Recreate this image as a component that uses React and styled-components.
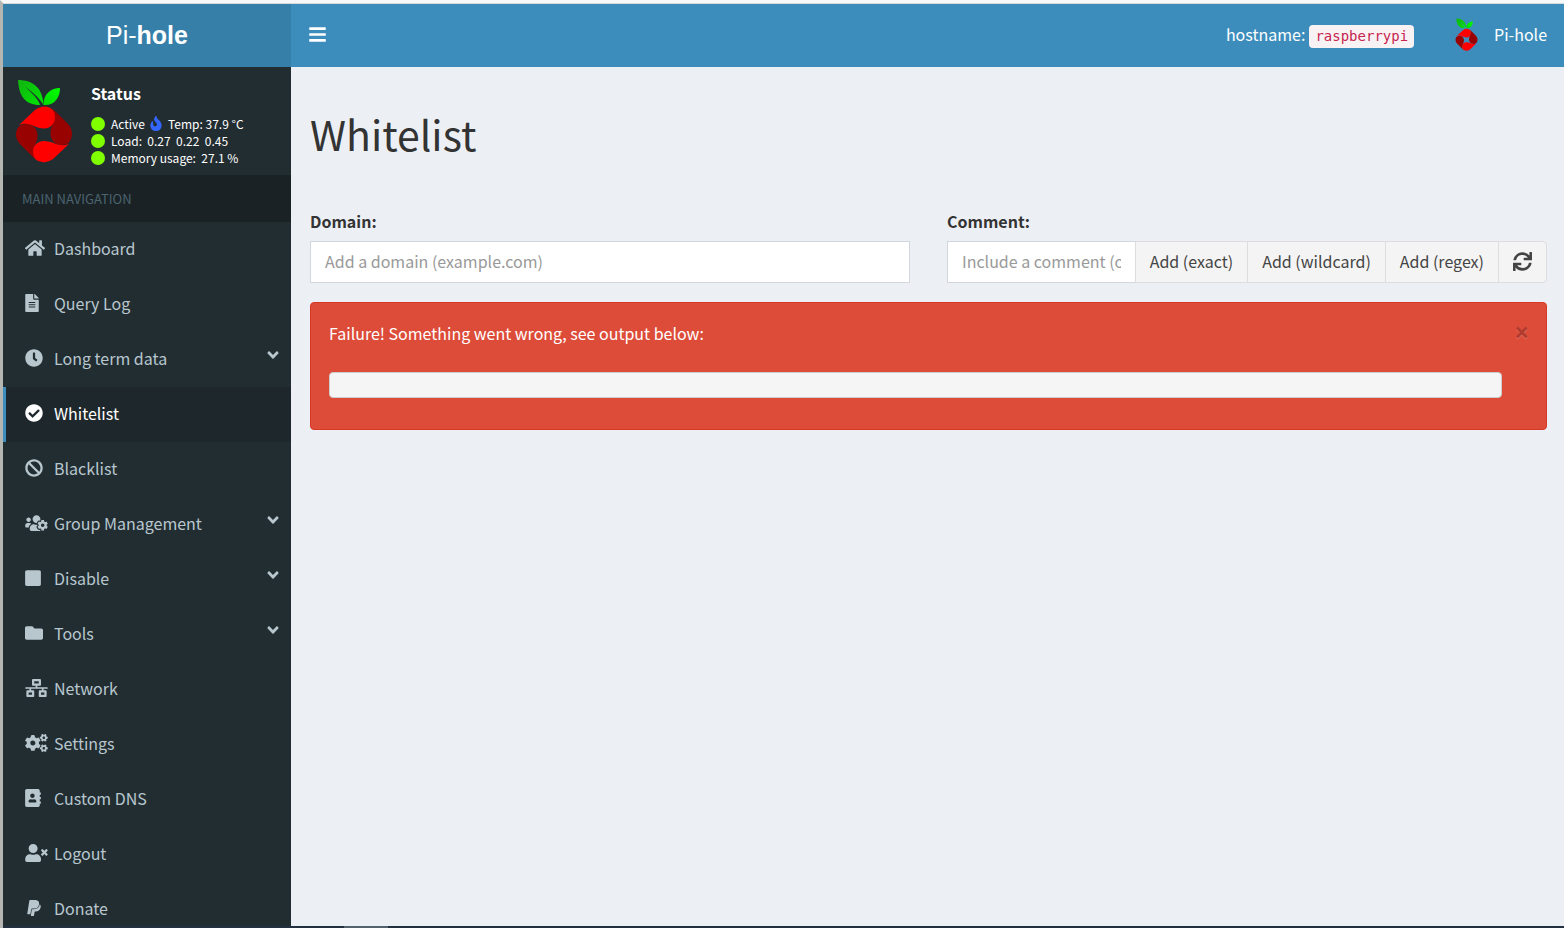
import React from 'react';
import styled, {createGlobalStyle} from 'styled-components';
import {
	FaAddressBook,
	FaAngleDown,
	FaBan,
	FaBars,
	FaCheckCircle,
	FaClock,
	FaCogs,
	FaFileAlt,
	FaFire,
	FaFolder,
	FaHome,
	FaNetworkWired,
	FaPaypal,
	FaSquare,
	FaSync,
	FaUsersCog,
	FaUserTimes,
} from 'react-icons/fa';

const GlobalStyle = createGlobalStyle`
	* {
		box-sizing: border-box;
	}

	body {
		margin: 0;
		background: #ecf0f5;
		color: #333;
		font-family: 'Noto Sans CJK SC', 'Noto Sans', sans-serif;
		font-size: 16px;
		line-height: 25px;
	}

	button,
	input {
		font: inherit;
	}

	a {
		color: inherit;
		text-decoration: none;
	}
`;

const Page = styled.div`
	display: flex;
	flex-direction: column;
	height: 100vh;
	overflow: hidden;
	border-top: 3px solid #f8f8f8;
	border-left: 3px solid #b5b5b1;
`;

const Header = styled.header`
	display: flex;
	flex: none;
	height: 64px;
	border-top: 1px solid #d5dade;
	background: #3c8dbc;
	color: #fff;
`;

const Brand = styled.a`
	flex: none;
	width: 288px;
	background: #367fa9;
	font-family: 'Liberation Sans', Arial, sans-serif;
	font-size: 25px;
	line-height: 63px;
	text-align: center;
`;

const Navbar = styled.nav`
	display: flex;
	flex: 1;
	align-items: center;
	padding: 0 17px 2px 18px;
`;

const MenuToggle = styled.button`
	display: flex;
	margin-right: auto;
	padding: 0;
	border: none;
	background: none;
	color: #fff;

	svg {
		width: 17px;
		height: 19px;
	}
`;

const Hostname = styled.span`
	display: flex;
	align-items: center;
	gap: 4px;
`;

const Code = styled.code`
	margin-top: 3px;
	padding: 0 6px;
	border-radius: 4px;
	background: #f9f2f4;
	color: #c7254e;
	font-family: 'DejaVu Sans Mono', monospace;
	font-size: 14px;
	line-height: 23px;
`;

const UserLink = styled.a`
	display: flex;
	align-items: center;
	gap: 16px;
	margin-left: 41px;
`;

const Body = styled.div`
	display: flex;
	flex: 1;
	min-height: 0;
`;

const Sidebar = styled.aside`
	flex: none;
	width: 288px;
	overflow: hidden;
	background: #222d32;
	color: #b8c7ce;
`;

const UserPanel = styled.section`
	display: flex;
	gap: 18px;
	padding: 12px 12px 0;
	height: 108px;
	color: #fff;
`;

const Status = styled.div`
	padding-top: 2px;
`;

const StatusTitle = styled.p`
	margin: 0 0 10px;
	font-weight: 600;
	line-height: 24px;
`;

const StatusLine = styled.div`
	display: flex;
	align-items: center;
	font-size: 12px;
	line-height: 17px;
	white-space: pre;

	svg {
		width: 12px;
		height: 15px;
		margin: 0 6px 0 5px;
		color: #3366ff;
	}
`;

const Dot = styled.i`
	width: 14px;
	height: 14px;
	margin-right: 6px;
	border-radius: 50%;
	background: #7fff00;
`;

const NavHeading = styled.h2`
	margin: 0;
	padding: 0 19px;
	background: #1a2226;
	color: #4b646f;
	font-size: 13px;
	font-weight: 400;
	line-height: 47px;
`;

const NavList = styled.ul`
	margin: 0;
	padding: 0;
	list-style: none;
`;

const NavLink = styled.a`
	display: flex;
	align-items: center;
	gap: 4px;
	height: 55px;
	padding: 0 9px 2px 19px;
	border-left: 3px solid ${(props) => (props.$active ? '#3c8dbc' : 'transparent')};
	background: ${(props) => (props.$active ? '#1e282c' : 'transparent')};
	color: ${(props) => (props.$active ? '#fff' : '#b8c7ce')};
`;

const NavIcon = styled.span`
	display: flex;
	width: 25px;
	padding-bottom: 1px;

	svg {
		flex: none;
		width: ${(props) => props.$width || 18}px;
		height: 18px;
	}
`;

const NavArrow = styled(FaAngleDown)`
	margin: 0 0 7px auto;
	font-size: 18px;
`;

const Content = styled.main`
	flex: 1;
	min-width: 0;
	padding: 31px 17px 0 19px;
`;

const Title = styled.h1`
	margin: 0 0 41px;
	font-size: 41px;
	font-weight: 400;
	line-height: 70px;
`;

const FormRow = styled.div`
	display: grid;
	grid-template-columns: 1fr 1fr;
	gap: 37px;
	margin-bottom: 19px;
`;

const Field = styled.div`
	min-width: 0;
`;

const Label = styled.label`
	display: block;
	margin-bottom: 7px;
	font-weight: 700;
`;

const Input = styled.input`
	flex: 1;
	width: 100%;
	min-width: 0;
	height: 42px;
	padding: 0 14px 2px;
	border: 1px solid #d2d6de;
	border-radius: 0;
	background: #fff;
	color: #555;

	&::placeholder {
		color: #999;
		opacity: 1;
	}
`;

const InputGroup = styled.div`
	display: flex;
`;

const Button = styled.button`
	display: flex;
	align-items: center;
	height: 42px;
	margin-left: -1px;
	padding: 0 14px 2px;
	border: 1px solid #ddd;
	background: #f4f4f4;
	color: #444;
	white-space: nowrap;

	&:last-child {
		border-radius: 0 4px 4px 0;
	}

	svg {
		font-size: 19px;
	}
`;

const Alert = styled.div`
	position: relative;
	padding: 18px 44px 31px 18px;
	border: 1px solid #d73925;
	border-radius: 4px;
	background: #dd4b39;
	color: #fff;
`;

const Close = styled.button`
	position: absolute;
	top: 17px;
	right: 17px;
	padding: 0;
	border: none;
	background: none;
	color: #000;
	font-family: 'Noto Sans', sans-serif;
	font-size: 26px;
	font-weight: 700;
	text-shadow: 0 1px 0 #fff;
	opacity: 0.2;
`;

const Output = styled.pre`
	height: 26px;
	margin: 26px 0 0;
	border: 1px solid #ccc;
	border-radius: 4px;
	background: #f5f5f5;
`;

const BottomEdge = styled.div`
	display: flex;
	flex: none;
	height: 2px;
	padding-left: 341px;
	background: #22303f;

	&::before {
		content: '';
		width: 44px;
		background: #53626c;
	}
`;

const navItems = [
	{label: 'Dashboard', icon: FaHome, width: 20},
	{label: 'Query Log', icon: FaFileAlt, width: 14},
	{label: 'Long term data', icon: FaClock, tree: true},
	{label: 'Whitelist', icon: FaCheckCircle, active: true},
	{label: 'Blacklist', icon: FaBan},
	{label: 'Group Management', icon: FaUsersCog, width: 23, tree: true},
	{label: 'Disable', icon: FaSquare, width: 16, tree: true},
	{label: 'Tools', icon: FaFolder, tree: true},
	{label: 'Network', icon: FaNetworkWired, width: 23},
	{label: 'Settings', icon: FaCogs, width: 23},
	{label: 'Custom DNS', icon: FaAddressBook, width: 16},
	{label: 'Logout', icon: FaUserTimes, width: 23},
	{label: 'Donate', icon: FaPaypal},
];

const Logo = ({id, width, height}) => (
	<svg width={width} height={height} viewBox="0 0 58 84" aria-hidden="true">
		<defs>
			<linearGradient id={`${id}-a`} x1="0" y1="0" x2="1" y2="1">
				<stop offset="0" stopColor="#12b212" />
				<stop offset="1" stopColor="#00e600" />
			</linearGradient>
			<linearGradient id={`${id}-b`} x1="0" y1="1" x2="1" y2="0">
				<stop offset="0" stopColor="#00d800" />
				<stop offset="1" stopColor="#00ff00" />
			</linearGradient>
		</defs>
		<path fill={`url(#${id}-a)`} d="M3 1C18 1 28 9 28.500 26C26 21 19 14 10 7.500C17 14 24 21 25 26C10 26 4 17 3 1Z" />
		<path fill={`url(#${id}-b)`} d="M45 9C36 9 28 15 28.500 26C39 27 45 19 45 9Z" />
		<path fill="#980200" d="M38 30L53 45Q57.500 50 57 56Q56 66 46.500 66C40 66 35.500 61 35.500 55C35.500 45 42 42 38 30Z" />
		<path fill="#980200" d="M20 80L5 65Q0.500 60 1 54Q2 45 11.500 45C18 45 22.500 50 22.500 56C22.500 66 16 68 20 80Z" />
		<path fill="#f00" d="M4 46L20 31Q25 27 31 27.500Q40 29 40 38C40 45 35 49.500 29 49.500C19 49.500 15 42 4 46Z" />
		<path fill="#f00" d="M54 65L38 80Q33 84 27 83Q18 82 18 73C18 66 23 62 29 62C39 62 43 69 54 65Z" />
	</svg>
);

const App = () => {
	return (
		<Page>
			<GlobalStyle />
			<Header>
				<Brand href="#">Pi-<b>hole</b></Brand>
				<Navbar>
					<MenuToggle aria-label="Toggle navigation"><FaBars /></MenuToggle>
					<Hostname>hostname: <Code>raspberrypi</Code></Hostname>
					<UserLink href="#">
						<Logo id="small" width={23} height={33} />
						Pi-hole
					</UserLink>
				</Navbar>
			</Header>
			<Body>
				<Sidebar>
					<UserPanel>
						<Logo id="large" width={58} height={84} />
						<Status>
							<StatusTitle>Status</StatusTitle>
							<StatusLine><Dot />Active<FaFire />Temp: 37.9 °C</StatusLine>
							<StatusLine><Dot />{'Load:  0.27  0.22  0.45'}</StatusLine>
							<StatusLine><Dot />{'Memory usage:  27.1 %'}</StatusLine>
						</Status>
					</UserPanel>
					<NavHeading>MAIN NAVIGATION</NavHeading>
					<NavList>
						{navItems.map((item) => (
							<li key={item.label}>
								<NavLink href="#" $active={item.active}>
									<NavIcon $width={item.width}><item.icon /></NavIcon>
									{item.label}
									{item.tree && <NavArrow />}
								</NavLink>
							</li>
						))}
					</NavList>
				</Sidebar>
				<Content>
					<Title>Whitelist</Title>
					<FormRow>
						<Field>
							<Label htmlFor="domain">Domain:</Label>
							<Input id="domain" type="text" placeholder="Add a domain (example.com)" />
						</Field>
						<Field>
							<Label htmlFor="comment">Comment:</Label>
							<InputGroup>
								<Input id="comment" type="text" placeholder="Include a comment (optional)" />
								<Button>Add (exact)</Button>
								<Button>Add (wildcard)</Button>
								<Button>Add (regex)</Button>
								<Button aria-label="Refresh"><FaSync /></Button>
							</InputGroup>
						</Field>
					</FormRow>
					<Alert role="alert">
						<Close aria-label="Close">×</Close>
						Failure! Something went wrong, see output below:
						<Output />
					</Alert>
				</Content>
			</Body>
			<BottomEdge />
		</Page>
	);
};

export default App;
